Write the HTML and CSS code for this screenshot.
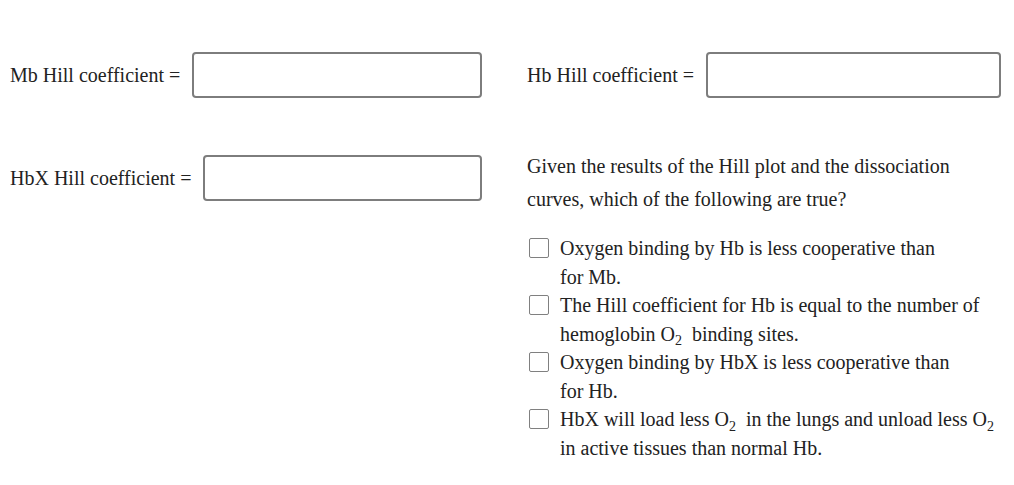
FILE: index.html
```html
<!DOCTYPE html>
<html>
<head>
<meta charset="utf-8">
<link rel="stylesheet" href="styles.css">
</head>
<body>
<div class="page">
  <div class="col left">
    <div class="field">
      <span class="label">Mb Hill coefficient =</span>
      <div class="input"></div>
    </div>
    <div class="field second">
      <span class="label">HbX Hill coefficient =</span>
      <div class="input"></div>
    </div>
  </div>
  <div class="col right">
    <div class="field">
      <span class="label">Hb Hill coefficient =</span>
      <div class="input"></div>
    </div>
    <p class="question">Given the results of the Hill plot and the dissociation<br>curves, which of the following are true?</p>
    <ul class="options">
      <li><span class="box"></span><span class="text">Oxygen binding by Hb is less cooperative than<br>for Mb.</span></li>
      <li><span class="box"></span><span class="text">The Hill coefficient for Hb is equal to the number of<br>hemoglobin O<sub>2</sub> binding sites.</span></li>
      <li><span class="box"></span><span class="text">Oxygen binding by HbX is less cooperative than<br>for Hb.</span></li>
      <li><span class="box"></span><span class="text">HbX will load less O<sub>2</sub> in the lungs and unload less O<sub>2</sub><br>in active tissues than normal Hb.</span></li>
    </ul>
  </div>
</div>
</body>
</html>
```

FILE: styles.css
```css
* { box-sizing: border-box; }
html, body { margin: 0; padding: 0; background: #fff; }
body {
  font-family: "Liberation Serif", "Times New Roman", serif;
  font-size: 20px;
  color: #222;
}
.page {
  display: grid;
  grid-template-columns: 472px 474px;
  column-gap: 45px;
  padding: 52px 13px 0 10px;
}
.col { display: flex; flex-direction: column; }
.field {
  display: flex;
  align-items: center;
  gap: 12px;
}
.field.second { margin-top: 57px; }
.label { white-space: nowrap; }
.input {
  flex: 1;
  height: 46px;
  border: 2px solid #7d7d7d;
  border-radius: 4px;
  background: #fff;
}
.question {
  margin: 52px 0 0 0;
  line-height: 33px;
  white-space: nowrap;
}
.options {
  list-style: none;
  margin: 18px 0 0 0;
  padding: 0;
}
.options li {
  display: flex;
  align-items: flex-start;
  line-height: 28.5px;
}
.box {
  flex: none;
  width: 20px;
  height: 20px;
  border: 1.5px solid #808080;
  border-radius: 2px;
  margin: 4px 11px 0 2px;
}
.text { white-space: nowrap; }
sub {
  font-size: 0.7em;
  line-height: 0;
  vertical-align: -0.35em;
  margin-right: 5px;
}
```
